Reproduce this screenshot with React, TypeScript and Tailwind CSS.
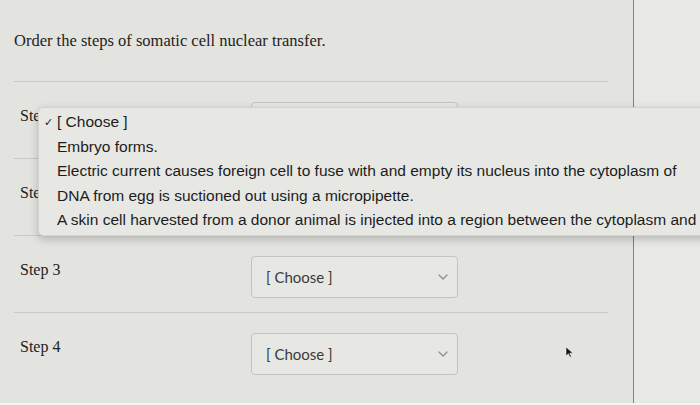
const steps = ["Step 1", "Step 2", "Step 3", "Step 4"];

const options = [
  "Embryo forms.",
  "Electric current causes foreign cell to fuse with and empty its nucleus into the cytoplasm of",
  "DNA from egg is suctioned out using a micropipette.",
  "A skin cell harvested from a donor animal is injected into a region between the cytoplasm and",
];

function Chevron() {
  return (
    <svg width="10" height="6" viewBox="0 0 10 6" fill="none">
      <path d="M1 1l4 4 4-4" stroke="#8c8d8a" strokeWidth="1.2" strokeLinecap="round" strokeLinejoin="round" />
    </svg>
  );
}

function ChooseSelect() {
  return (
    <div className="mt-[20px] flex h-[42px] w-[207px] items-center justify-between rounded-[4px] border border-[#c3c4c0] bg-[#e7e8e4] pl-[14px] pr-[9px]">
      <span className="text-[15px] text-[#3a3b39] [font-family:Lato,'Liberation_Sans',sans-serif]">[ Choose ]</span>
      <Chevron />
    </div>
  );
}

function Cursor() {
  return (
    <svg className="absolute left-[565px] top-[346px]" width="9" height="12" viewBox="0 0 9 12">
      <path d="M1 1v9l2.4-2.2 1.6 3.4 1.4-.7-1.6-3.3H8z" fill="#151515" stroke="#f2f2f2" strokeWidth="0.6" />
    </svg>
  );
}

export default function App() {
  return (
    <div className="relative h-[405px] w-[700px] overflow-hidden bg-[#e3e4e0]">
      <div className="flex h-[403px]">
        <div className="w-[634px] border-r-[1.5px] border-[#80817e] pl-[14px] pt-[31px]">
          <p className="text-[16.5px] leading-[20px] text-[#222] [font-family:'Liberation_Serif',serif]">
            Order the steps of somatic cell nuclear transfer.
          </p>
          <div className="mt-[30px] w-[594px] border-t border-[#c9cac6]">
            {steps.map((s, i) => (
              <div
                key={s}
                className={`flex h-[77px] ${i < steps.length - 1 ? "border-b border-[#c9cac6]" : ""}`}
              >
                <div className="w-[237px] pl-[6px] pt-[24px] text-[16px] leading-[20px] text-[#222] [font-family:'Liberation_Serif',serif]">
                  {s}
                </div>
                <ChooseSelect />
              </div>
            ))}
          </div>
        </div>
        <div className="flex-1 bg-[#e8e9e5]" />
      </div>
      <div className="h-[2px] bg-[#f4f4f2]" />

      {/* open native menu for step 1 */}
      <div className="absolute left-[38px] top-[107px] h-[129px] w-[690px] rounded-[5px] border border-[#d2d3cf] bg-[#e7e8e4] pt-[2px] shadow-[0_3px_8px_rgba(0,0,0,0.22)] [font-family:'Liberation_Sans',sans-serif]">
        <div className="relative whitespace-nowrap pl-[18px] text-[15.5px] leading-[24.5px] text-[#1c1c1c]">
          <span className="absolute left-[5px] top-0 text-[11px]">✓</span>
          [ Choose ]
        </div>
        {options.map((o) => (
          <div key={o} className="whitespace-nowrap pl-[18px] text-[15.5px] leading-[24.5px] text-[#1c1c1c]">
            {o}
          </div>
        ))}
      </div>

      <Cursor />
    </div>
  );
}
